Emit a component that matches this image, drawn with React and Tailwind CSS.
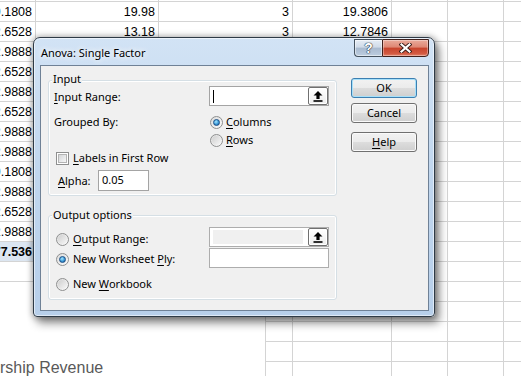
import React from "react";

const W = ["w-[36px]", "w-[123px]", "w-[134px]", "w-[99px]", "w-[56px]", "w-[56px]", "w-[60px]"];

const colA = [
  "9.1808", "2.6528", "2.9888", "2.6528", "2.9888", "2.6528",
  "2.9888", "2.9888", "9.1808", "2.9888", "2.6528", "2.9888",
];

const rows = Array.from({ length: 20 }, (_, r) => {
  const cells = ["", "", "", "", "", "", ""];
  if (r >= 1 && r <= 12) cells[0] = colA[r - 1];
  if (r === 13) cells[0] = "77.536";
  return cells;
});
rows[1] = ["9.1808", "19.98", "3", "19.3806", "", "", ""];
rows[2] = ["2.6528", "13.18", "3", "12.7846", "", "", ""];

function Radio({ checked }) {
  return (
    <span className="flex h-[13px] w-[13px] shrink-0 items-center justify-center rounded-full border border-[#8e8f8f] bg-gradient-to-br from-[#dcdcdc] to-[#fbfbfb]">
      {checked ? (
        <span className="h-[7px] w-[7px] rounded-full border border-[#1b4f86] bg-[radial-gradient(circle_at_40%_35%,#a6e6ff_0%,#3b9ad8_55%,#17508f_100%)]" />
      ) : (
        <span className="h-[9px] w-[9px] rounded-full bg-gradient-to-br from-[#cfcfcf] to-[#f7f7f7]" />
      )}
    </span>
  );
}

function Checkbox() {
  return (
    <span className="flex h-[13px] w-[13px] shrink-0 items-center justify-center border border-[#8e8f8f] bg-white">
      <span className="h-[9px] w-[9px] border border-[#b4b4b4] bg-gradient-to-br from-[#d4d6d8] to-[#f7f7f7]" />
    </span>
  );
}

function RefButton() {
  return (
    <div className="flex h-[18px] w-[20px] shrink-0 items-center justify-center rounded-[2px] border border-[#707070] bg-gradient-to-b from-[#ffffff] to-[#ececec] shadow-[inset_0_0_0_1px_#ffffff]">
      <svg width="10" height="11" viewBox="0 0 10 11">
        <path d="M5 0 L9.5 4.6 L6.6 4.6 L6.6 8 L3.4 8 L3.4 4.6 L0.5 4.6 Z" fill="#000" />
        <rect x="0.5" y="9.2" width="9" height="1.6" fill="#000" />
      </svg>
    </div>
  );
}

function Btn({ children, def }) {
  return (
    <div
      className={`flex h-[20px] w-[66px] items-center justify-center rounded-[3px] border bg-[linear-gradient(#f2f2f2_0%,#ebebeb_50%,#dddddd_50%,#cfcfcf_100%)] ${
        def ? "border-[#3c7fb1] shadow-[inset_0_0_0_1px_#a6e0fa]" : "border-[#707070] shadow-[inset_0_0_0_1px_#fafafa]"
      }`}
    >
      {children}
    </div>
  );
}

function Group({ label, top, className, children }) {
  return (
    <div className={`relative w-[289px] rounded-[3px] border border-[#d5dfe5] shadow-[inset_0_0_0_1px_#ffffff] ${className}`}>
      <span className={`absolute left-[3px] ${top} bg-[#f0f0f0] px-[1px] leading-[15px]`}>{label}</span>
      {children}
    </div>
  );
}

const U = ({ children }) => <span className="underline underline-offset-[2px]">{children}</span>;

export default function App() {
  return (
    <div className="relative h-[376px] w-[521px] overflow-hidden bg-white font-['Liberation_Sans',sans-serif]">
      <div className="mt-[-18px]">
        {rows.map((cells, r) => (
          <div key={r} className="flex h-[20px] border-b border-[#d4d4d4]">
            {cells.map((c, i) => (
              <div
                key={i}
                className={`${W[i]} flex shrink-0 items-center justify-end overflow-hidden whitespace-nowrap border-r border-[#d4d4d4] pr-[3px] pt-[2px] text-[12.5px] text-black ${
                  r === 13 && i === 0 ? "bg-[#dce6f1] font-bold" : ""
                }`}
              >
                <span>{c}</span>
              </div>
            ))}
          </div>
        ))}
      </div>

      <div className="absolute left-0 top-[283px] h-[93px] w-[266px] border-r border-[#d4d4d4] bg-white">
        <p className="whitespace-nowrap pt-[76px] text-[16px] leading-[18px] text-[#595959]">rship Revenue</p>
      </div>

      <div className="absolute left-[33px] top-[37px] flex h-[280px] w-[402px] flex-col rounded-t-[7px] rounded-b-[4px] border border-[#2e3a46] bg-gradient-to-b from-[#d2e3f5] via-[#c0d6ee] to-[#b7cfea] pb-[5px] pl-[6px] pr-[5px] font-['Noto_Sans',sans-serif] text-[11px] text-black shadow-[inset_0_0_0_1px_rgba(255,255,255,0.55),0_0_6px_1px_rgba(0,0,0,0.3),4px_6px_10px_rgba(0,0,0,0.45)]">
        <div className="flex h-[27px] shrink-0 items-start">
          <span className="ml-[1px] mt-[7px] leading-[15px] [text-shadow:0_0_6px_#fff,0_0_6px_#fff]">Anova: Single Factor</span>
          <div className="ml-auto mt-[1px] flex h-[18px]">
            <div className="flex w-[28px] items-center justify-center rounded-bl-[4px] border border-r-0 border-[#45525f] bg-[linear-gradient(#e6edf5_0%,#d0dbe8_45%,#a9bacf_50%,#bccde0_100%)] shadow-[inset_0_0_0_1px_rgba(255,255,255,0.5)]">
              <span className="font-['Liberation_Sans',sans-serif] text-[14px] font-bold leading-[14px] text-white [text-shadow:0_0_1px_#1f2c3a,0_0_1px_#1f2c3a,0_0_1px_#1f2c3a]">?</span>
            </div>
            <div className="flex w-[47px] items-center justify-center rounded-br-[4px] border border-[#40201c] bg-[linear-gradient(#eaab9c_0%,#de8673_45%,#c7432c_50%,#d35a42_85%,#e2866f_100%)] shadow-[inset_0_0_0_1px_rgba(255,255,255,0.35)]">
              <svg width="13" height="10" viewBox="0 0 13 10">
                <path d="M2.5 1.5 L10.5 8.5 M10.5 1.5 L2.5 8.5" stroke="#3a1c18" strokeWidth="4" strokeLinecap="square" />
                <path d="M2.5 1.5 L10.5 8.5 M10.5 1.5 L2.5 8.5" stroke="#ffffff" strokeWidth="2.2" strokeLinecap="square" />
              </svg>
            </div>
          </div>
        </div>

        <div className="flex flex-1 border border-[#6f8196] bg-[#f0f0f0]">
          <div className="ml-[7px] flex w-[289px] flex-col pt-[14px]">
            <Group label="Input" top="top-[-10px]" className="h-[116px]">
              <div className="flex flex-col">
                <div className="mt-[5px] flex h-[20px] items-center">
                  <span className="w-[160px] pl-[5px] pt-[2px]"><U>I</U>nput Range:</span>
                  <div className="flex h-[20px] w-[120px] items-center border border-[#a4a4a4] bg-white">
                    <span className="ml-[3px] h-[13px] w-[1px] bg-black" />
                    <div className="ml-auto"><RefButton /></div>
                  </div>
                </div>
                <div className="mt-[9px] flex h-[14px] items-center">
                  <span className="w-[160px] pl-[5px] pt-[1px]">Grouped By:</span>
                  <div className="ml-[1px] flex items-center gap-[3px]">
                    <Radio checked />
                    <span><U>C</U>olumns</span>
                  </div>
                </div>
                <div className="mt-[4px] flex h-[14px] items-center pl-[161px]">
                  <div className="flex items-center gap-[3px]">
                    <Radio />
                    <span><U>R</U>ows</span>
                  </div>
                </div>
                <div className="mt-[5px] flex h-[13px] items-center gap-[4px] pl-[7px]">
                  <Checkbox />
                  <span><U>L</U>abels in First Row</span>
                </div>
                <div className="mt-[5px] flex h-[21px] items-center">
                  <span className="w-[49px] pl-[9px] pt-[1px]"><U>A</U>lpha:</span>
                  <div className="flex h-[21px] w-[51px] items-center border border-[#a4a4a4] bg-white pl-[3px]">0.05</div>
                </div>
              </div>
            </Group>

            <Group label="Output options" top="top-[-9px]" className="mt-[19px] h-[85px]">
              <div className="flex">
                <div className="flex w-[160px] flex-col pl-[7px]">
                  <div className="mt-[14px] flex h-[19px] items-center gap-[4px]">
                    <Radio />
                    <span><U>O</U>utput Range:</span>
                  </div>
                  <div className="flex h-[20px] items-center gap-[4px]">
                    <Radio checked />
                    <span>New Worksheet <U>P</U>ly:</span>
                  </div>
                  <div className="mt-[5px] flex h-[20px] items-center gap-[4px]">
                    <Radio />
                    <span>New <U>W</U>orkbook</span>
                  </div>
                </div>
                <div className="flex w-[120px] flex-col">
                  <div className="mt-[11px] flex h-[20px] items-stretch border border-[#adadad] bg-white">
                    <div className="my-[2px] ml-[3px] mr-[5px] flex-1 bg-[#f0f0f0]" />
                    <RefButton />
                  </div>
                  <div className="mt-[1px] h-[20px] border border-[#adadad] bg-white" />
                </div>
              </div>
            </Group>
          </div>

          <div className="ml-[14px] flex flex-col pt-[12px]">
            <Btn def>OK</Btn>
            <div className="mt-[5px]"><Btn>Cancel</Btn></div>
            <div className="mt-[9px]"><Btn><span><U>H</U>elp</span></Btn></div>
          </div>
        </div>
      </div>
    </div>
  );
}
